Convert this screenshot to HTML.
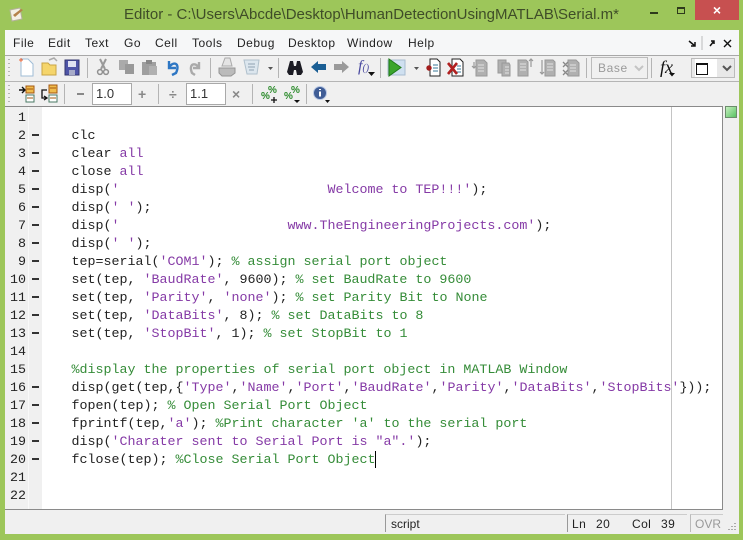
<!DOCTYPE html>
<html><head><meta charset="utf-8"><style>
html,body{margin:0;padding:0}
body{width:743px;height:540px;overflow:hidden;background:#9dc65a;position:relative;font-family:"Liberation Sans",sans-serif}
div,span.a,svg{position:absolute}
.m{top:36px;font-size:12px;color:#222;letter-spacing:.5px;line-height:14px}
.l{left:0;width:743px;height:1px;background:#a8a8a8}
.s{width:1px;background:#b4b4b4}
.c{left:71.5px;font:13.33px/18px "Liberation Mono",monospace;color:#222;white-space:pre;height:18px}
.n{left:6px;width:20px;text-align:right;font:13.33px/18px "Liberation Mono",monospace;color:#222;height:18px}
.d{left:32px;width:7px;height:2px;background:#333}
i{font-style:normal}
.k{color:#853aa6}.g{color:#358c38}
.b{background:#fff;border:1px solid #a9a9a9;box-sizing:border-box;font-size:13px;color:#333;line-height:20px;padding-left:3px}
.t{font-size:14px;color:#888;font-weight:bold;line-height:16px}
.p{font:bold 10px/10px "Liberation Sans",sans-serif;color:#2a8a2a}
</style></head><body>
<svg style="left:8px;top:6px" width="16" height="18" viewBox="0 0 16 18"><path d="M2 4l10-2 2 11-10 2z" fill="#f4f1e4" stroke="#b5b29c"/><path d="M5 9l8-6 2 1-8 7z" fill="#b5834a"/></svg>
<div style="left:124px;top:5px;font-size:15px;line-height:20px;color:#3f4d28;white-space:nowrap">Editor - C:\Users\Abcde\Desktop\HumanDetectionUsingMATLAB\Serial.m*</div>
<div style="left:650px;top:12px;width:8px;height:2px;background:#2e3a1c"></div>
<div style="left:677px;top:7px;width:6px;height:4px;border:1px solid #2e3a1c;border-top-width:2px"></div>
<div style="left:695px;top:0;width:44px;height:20px;background:#c75050"></div>
<div style="left:695px;top:0;width:44px;height:20px;color:#fff;text-align:center;font-size:14px;font-weight:bold;line-height:20px">×</div>
<div style="left:5px;top:30px;width:734px;height:504px;background:#f0f0f0"></div>
<div style="left:5px;top:30px;width:734px;height:25px;background:#f6f7f8"></div>
<div class="m" style="left:13px">File</div><div class="m" style="left:48px">Edit</div><div class="m" style="left:85px">Text</div><div class="m" style="left:124px">Go</div><div class="m" style="left:155px">Cell</div><div class="m" style="left:192px">Tools</div><div class="m" style="left:237px">Debug</div><div class="m" style="left:288px">Desktop</div><div class="m" style="left:347px">Window</div><div class="m" style="left:408px">Help</div>
<svg style="left:686px;top:36px" width="50" height="14" viewBox="0 0 50 14"><path d="M3 5l6 5M9 6v4H5" stroke="#111" stroke-width="1.5" fill="none"/><path d="M16 0v14" stroke="#bbb"/><path d="M24 10l4-5M25 5h3v3" stroke="#111" stroke-width="1.5" fill="none"/><path d="M38 4l7 7M45 4l-7 7" stroke="#111" stroke-width="1.4"/></svg>
<div class="l" style="top:55px;left:5px;width:734px"></div>
<div class="l" style="top:81px;left:5px;width:734px;background:#b5b5b5"></div>
<div class="l" style="top:106px;left:5px;width:718px;background:#8a8a8a;height:1px"></div>
<svg style="left:0;top:55px" width="743" height="52" viewBox="0 55 743 52">
<path d="M9 59v1M9 63v1M9 67v1M9 71v1M9 75v1M9 85v1M9 89v1M9 93v1M9 97v1M9 101v1" stroke="#b5b5b5" stroke-width="2"/>
<path d="M21 59h7l5 5v12H21z" fill="#fff" stroke="#9fbcd6"/><path d="M19 60h4M21 58v4" stroke="#e8663a"/>
<path d="M42 63h6l2 2h6v10H42z" fill="#f5d56b" stroke="#c9a544"/><path d="M49 60l5-2 3 3" fill="none" stroke="#aaa" stroke-width="1.5"/>
<rect x="65" y="60" width="14" height="15" fill="#4f55a8" stroke="#33366e"/><rect x="68" y="61" width="8" height="6" fill="#dfe2f2"/><rect x="69" y="70" width="6" height="5" fill="#a7abc8"/>
<path d="M100 59l5 10M106 59l-5 10" stroke="#9a9a9a" stroke-width="2"/><circle cx="100" cy="72" r="2.4" fill="none" stroke="#909090" stroke-width="1.5"/><circle cx="106" cy="72" r="2.4" fill="none" stroke="#909090" stroke-width="1.5"/>
<rect x="119" y="60" width="9" height="10" fill="#aaa"/><rect x="125" y="64" width="9" height="10" fill="#999"/>
<rect x="142" y="62" width="14" height="13" fill="#9f9f9f"/><rect x="146" y="60" width="6" height="4" fill="#888"/><rect x="149" y="66" width="8" height="9" fill="#b0b0b0"/>
<path d="M169 61v7h7M169 68c3-7 12-6 7 5l-4 2" fill="none" stroke="#2e77c4" stroke-width="2.4"/>
<path d="M199 62v6h-6M199 68c-3-6-11-5-7 5l3 2" fill="none" stroke="#aaa" stroke-width="2.4"/>
<path d="M222 66l3-8h5l2 8z" fill="#e4e4e4" stroke="#aaa"/><path d="M219 68h16v5l-4 3h-9l-3-3z" fill="#bbb" stroke="#959595"/>
<path d="M244 60h15l-2 14h-10z" fill="#dce6ee" stroke="#b0c0cc"/><path d="M248 64h7M248 67h7M249 70h5" stroke="#8fa3b3"/>
<path d="M268 67h5l-2.500 3z" fill="#555"/>
<path d="M287 72l3-11h3l1 5h2l1-5h3l3 11-2 3h-4l-1-5h-2l-1 5h-4z" fill="#1c1c24"/>
<path d="M311 67l7-6v3h8v6h-8v3z" fill="#1a5e94"/>
<path d="M349 67l-7-6v3h-8v6h8v3z" fill="#9a9a9a"/>
<rect x="388" y="60" width="17" height="15" fill="#cfe0f0" stroke="#a9bdd0"/><path d="M389 59l12 8.500-12 8.500z" fill="#3aa52c" stroke="#217a1a"/>
<path d="M414 67h5l-2.500 3z" fill="#555"/>
<path d="M430 59h7l3 3v14H430z" fill="#fff" stroke="#222"/><path d="M433 65h5M433 68h5M433 71h5" stroke="#3a7a9a"/><circle cx="429" cy="68" r="2.700" fill="#a31c1c"/>
<path d="M452 59h8l3 3v14H452z" fill="#fff" stroke="#222"/><path d="M457 66h4M457 69h4M457 72h4" stroke="#3a7a9a"/><path d="M448 63l9 11M457 63l-9 11" stroke="#b02020" stroke-width="2.600"/>
<g fill="#b0b0b0" stroke="#999"><path d="M476 60h8l3 3v13H476z"/><path d="M498 60h8v13h-8z"/><path d="M502 63h7l1 2v11h-8z"/><path d="M518 60h8l2 2v14H518z"/><path d="M545 60h8l2 2v14H545z"/><path d="M568 60h8l3 3v13H568z"/></g>
<path d="M478 65h6M478 68h6M478 71h6M505 67h4M505 70h4M505 73h4M520 64h6M520 67h6M520 70h6M547 64h6M547 67h6M547 70h6M570 65h6M570 68h6M570 71h6" stroke="#e2e2e2"/>
<path d="M472 66l2 2 2-2M474 62v6M531 67v-8M529 61l2-2 2 2M542 60v14M540 72l2 2 2-2" stroke="#999" fill="none" stroke-width="1.200"/>
<path d="M563 62l5 5M568 62l-5 5M563 70l5 5M568 70l-5 5" stroke="#888" stroke-width="1.300"/>
<path d="M19 90h6M22 87l3 3-3 3" fill="none" stroke="#111" stroke-width="1.400"/>
<rect x="26" y="86" width="8" height="7" fill="#f0bc4c" stroke="#a35812"/><rect x="26" y="95" width="8" height="7" fill="#fff" stroke="#4a7a64"/>
<path d="M27 89h6M27 98h6" stroke="#a35812"/>
<path d="M47 90h-5v8h5M44 96l3 2-3 2" fill="none" stroke="#111" stroke-width="1.300"/>
<rect x="49" y="85" width="8" height="8" fill="#f0bc4c" stroke="#a35812"/><rect x="49" y="95" width="8" height="7" fill="#fff" stroke="#4a7a64"/>
<path d="M50 88h6M50 98h6" stroke="#a35812"/>
<circle cx="320" cy="93" r="6.500" fill="#3f5d96"/><circle cx="320" cy="93" r="6.500" fill="none" stroke="#b9c8e4"/><path d="M320 89v1M320 91.500v5" stroke="#fff" stroke-width="2"/><path d="M325 100h5l-2.500 3z" fill="#111"/>
<path d="M294 100h6l-3 3z" fill="#111"/>
<path d="M271 100h6M274 97v6" stroke="#111" stroke-width="1.300"/>
</svg>
<div style="left:358px;top:57px;font:italic 16px 'Liberation Serif',serif;color:#4a4aa0;line-height:20px">f<span style="font-size:10px">()</span></div>
<svg style="left:368px;top:72px" width="8" height="5"><path d="M0 0h7l-3.500 4z" fill="#111"/></svg>
<div class="p" style="left:261px;top:92px">%</div><div class="p" style="left:268px;top:86px">%</div>
<div class="p" style="left:284px;top:92px">%</div><div class="p" style="left:291px;top:86px">%</div>
<div class="s" style="left:87px;top:58px;height:20px"></div><div class="s" style="left:210px;top:58px;height:20px"></div><div class="s" style="left:278px;top:58px;height:20px"></div><div class="s" style="left:380px;top:58px;height:20px"></div><div class="s" style="left:586px;top:58px;height:20px"></div><div class="s" style="left:651px;top:58px;height:20px"></div>
<div class="s" style="left:64px;top:84px;height:20px"></div><div class="s" style="left:158px;top:84px;height:20px"></div><div class="s" style="left:252px;top:84px;height:20px"></div><div class="s" style="left:306px;top:84px;height:20px"></div>
<div style="left:591px;top:57px;width:57px;height:22px;border:1px solid #bbb;box-sizing:border-box;font-size:12px;line-height:20px;color:#9a9a9a;padding-left:6px;letter-spacing:.6px">Base</div>
<svg style="left:634px;top:65px" width="10" height="7"><path d="M1 1l4 4 4-4" fill="none" stroke="#c4c4c4" stroke-width="2"/></svg>
<div style="left:660px;top:57px;font:italic 18px/20px 'Liberation Serif',serif;color:#111">fx</div>
<svg style="left:669px;top:73px" width="7" height="4"><path d="M0 0h6l-3 3.500z" fill="#111"/></svg>
<div style="left:691px;top:58px;width:44px;height:20px;background:#e8e8e8;border:1px solid #bbb;box-sizing:border-box"></div>
<div style="left:695px;top:59px;width:22px;height:18px;background:#fff"></div>
<div style="left:696px;top:63px;width:12px;height:12px;border:1px solid #111;border-top-width:2px;box-sizing:border-box;background:#fff"></div>
<svg style="left:722px;top:65px" width="10" height="7"><path d="M1 1l4 4 4-4" fill="none" stroke="#555" stroke-width="2"/></svg>
<div style="left:77px;top:93px;width:7px;height:2px;background:#888"></div>
<div class="b" style="left:92px;top:83px;width:40px;height:22px">1.0</div>
<div class="t" style="left:138px;top:86px">+</div>
<div class="t" style="left:169px;top:86px">÷</div>
<div class="b" style="left:186px;top:83px;width:40px;height:22px">1.1</div>
<div class="t" style="left:232px;top:86px">×</div>
<div style="left:6px;top:107px;width:716px;height:402px;background:#fff"></div>
<div style="left:6px;top:107px;width:36px;height:402px;background:#f0f0f0"></div>
<div style="left:28px;top:107px;width:1px;height:402px;background:#f9f9f9"></div>
<div style="left:671px;top:107px;width:1px;height:402px;background:#c4c4c4"></div>
<div style="left:722px;top:106px;width:1px;height:404px;background:#8a8a8a"></div>
<div style="left:5px;top:509px;width:718px;height:1px;background:#8a8a8a"></div>
<div style="left:725px;top:106px;width:12px;height:12px;box-sizing:border-box;border:1px solid #6c8c6c;background:linear-gradient(135deg,#c6f0c0,#58c262)"></div>
<div class="n" style="top:110px">1</div><div class="n" style="top:128px">2</div><div class="n" style="top:146px">3</div><div class="n" style="top:164px">4</div><div class="n" style="top:182px">5</div><div class="n" style="top:200px">6</div><div class="n" style="top:218px">7</div><div class="n" style="top:236px">8</div><div class="n" style="top:254px">9</div><div class="n" style="top:272px">10</div><div class="n" style="top:290px">11</div><div class="n" style="top:308px">12</div><div class="n" style="top:326px">13</div><div class="n" style="top:344px">14</div><div class="n" style="top:362px">15</div><div class="n" style="top:380px">16</div><div class="n" style="top:398px">17</div><div class="n" style="top:416px">18</div><div class="n" style="top:434px">19</div><div class="n" style="top:452px">20</div><div class="n" style="top:470px">21</div><div class="n" style="top:488px">22</div>
<div class="d" style="top:134px"></div><div class="d" style="top:152px"></div><div class="d" style="top:170px"></div><div class="d" style="top:188px"></div><div class="d" style="top:206px"></div><div class="d" style="top:224px"></div><div class="d" style="top:242px"></div><div class="d" style="top:260px"></div><div class="d" style="top:278px"></div><div class="d" style="top:296px"></div><div class="d" style="top:314px"></div><div class="d" style="top:332px"></div><div class="d" style="top:386px"></div><div class="d" style="top:404px"></div><div class="d" style="top:422px"></div><div class="d" style="top:440px"></div><div class="d" style="top:458px"></div>
<div class="c" style="top:128px">clc</div>
<div class="c" style="top:146px">clear <i class="k">all</i></div>
<div class="c" style="top:164px">close <i class="k">all</i></div>
<div class="c" style="top:182px">disp(<i class="k">'                          Welcome to TEP!!!'</i>);</div>
<div class="c" style="top:200px">disp(<i class="k">' '</i>);</div>
<div class="c" style="top:218px">disp(<i class="k">'                     www.TheEngineeringProjects.com'</i>);</div>
<div class="c" style="top:236px">disp(<i class="k">' '</i>);</div>
<div class="c" style="top:254px">tep=serial(<i class="k">'COM1'</i>); <i class="g">% assign serial port object</i></div>
<div class="c" style="top:272px">set(tep, <i class="k">'BaudRate'</i>, 9600); <i class="g">% set BaudRate to 9600</i></div>
<div class="c" style="top:290px">set(tep, <i class="k">'Parity'</i>, <i class="k">'none'</i>); <i class="g">% set Parity Bit to None</i></div>
<div class="c" style="top:308px">set(tep, <i class="k">'DataBits'</i>, 8); <i class="g">% set DataBits to 8</i></div>
<div class="c" style="top:326px">set(tep, <i class="k">'StopBit'</i>, 1); <i class="g">% set StopBit to 1</i></div>
<div class="c g" style="top:362px">%display the properties of serial port object in MATLAB Window</div>
<div class="c" style="top:380px">disp(get(tep,{<i class="k">'Type'</i>,<i class="k">'Name'</i>,<i class="k">'Port'</i>,<i class="k">'BaudRate'</i>,<i class="k">'Parity'</i>,<i class="k">'DataBits'</i>,<i class="k">'StopBits'</i>}));</div>
<div class="c" style="top:398px">fopen(tep); <i class="g">% Open Serial Port Object</i></div>
<div class="c" style="top:416px">fprintf(tep,<i class="k">'a'</i>); <i class="g">%Print character 'a' to the serial port</i></div>
<div class="c" style="top:434px">disp(<i class="k">'Charater sent to Serial Port is "a".'</i>);</div>
<div class="c" style="top:452px">fclose(tep); <i class="g">%Close Serial Port Object</i></div>
<div style="left:375px;top:451px;width:1px;height:17px;background:#000"></div>
<div style="left:385px;top:514px;width:180px;height:18px;border-left:1px solid #999;border-top:1px solid #ccc;font-size:12px;line-height:19px;color:#222;padding-left:5px;box-sizing:border-box">script</div>
<div style="left:567px;top:514px;width:120px;height:18px;border-left:1px solid #999;border-top:1px solid #ccc;box-sizing:border-box"></div>
<div class="m" style="left:572px;top:517px;letter-spacing:.4px">Ln</div><div class="m" style="left:596px;top:517px">20</div><div class="m" style="left:632px;top:517px;letter-spacing:.4px">Col</div><div class="m" style="left:661px;top:517px">39</div>
<div style="left:690px;top:514px;width:33px;height:18px;border-left:1px solid #bbb;border-top:1px solid #ccc;box-sizing:border-box;font-size:12px;line-height:19px;color:#999;padding-left:4px">OVR</div>
<svg style="left:727px;top:522px" width="10" height="10"><path d="M8 1v1M5 4v1M8 4v1M2 7v1M5 7v1M8 7v1" stroke="#aaa" stroke-width="2"/></svg>
</body></html>
